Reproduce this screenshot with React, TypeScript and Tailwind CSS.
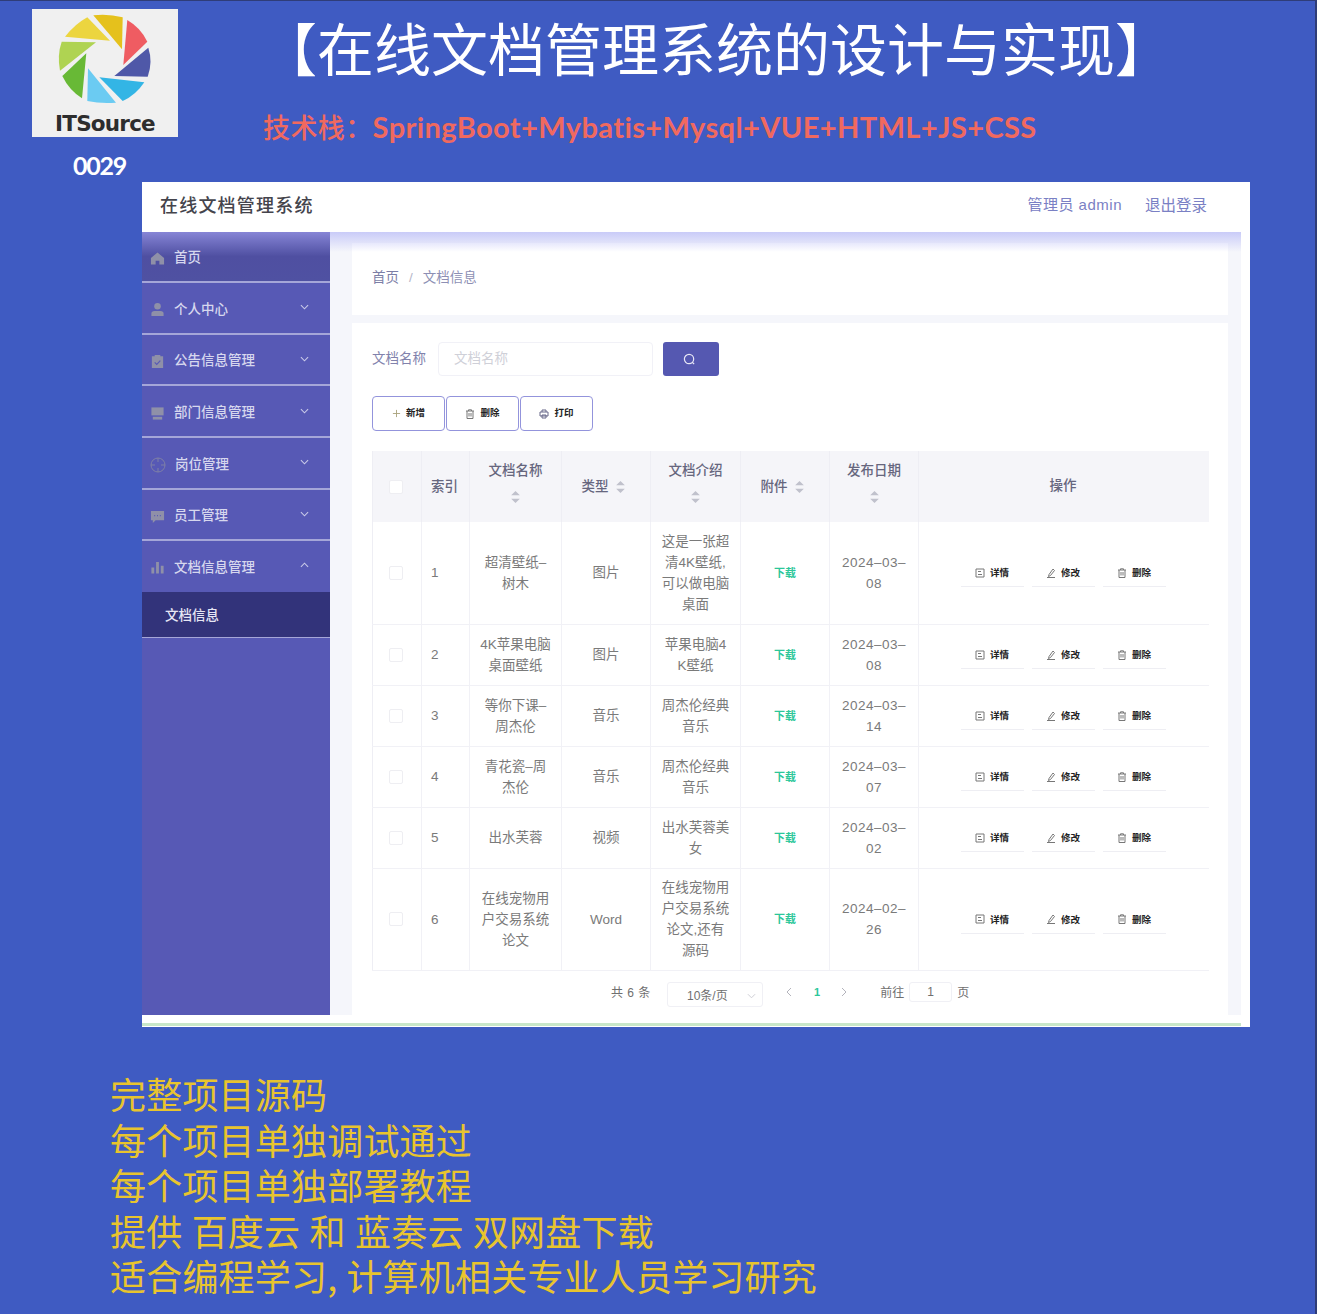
import React from 'react';

const menus = [
  { label: '个人中心', icon: 'user' },
  { label: '公告信息管理', icon: 'clip' },
  { label: '部门信息管理', icon: 'desk' },
  { label: '岗位管理', icon: 'aim' },
  { label: '员工管理', icon: 'chat' },
];

const rows = [
  { h: 'h-[102px]', n: '1', name: '超清壁纸–\n树木', type: '图片', intro: '这是一张超\n清4K壁纸,\n可以做电脑\n桌面', date: '2024–03–\n08' },
  { h: 'h-[61px]', n: '2', name: '4K苹果电脑\n桌面壁纸', type: '图片', intro: '苹果电脑4\nK壁纸', date: '2024–03–\n08' },
  { h: 'h-[61px]', n: '3', name: '等你下课–\n周杰伦', type: '音乐', intro: '周杰伦经典\n音乐', date: '2024–03–\n14' },
  { h: 'h-[61px]', n: '4', name: '青花瓷–周\n杰伦', type: '音乐', intro: '周杰伦经典\n音乐', date: '2024–03–\n07' },
  { h: 'h-[61px]', n: '5', name: '出水芙蓉', type: '视频', intro: '出水芙蓉美\n女', date: '2024–03–\n02' },
  { h: 'h-[102px]', n: '6', name: '在线宠物用\n户交易系统\n论文', type: 'Word', intro: '在线宠物用\n户交易系统\n论文,还有\n源码', date: '2024–02–\n26' },
];

const Logo = () => (
  <svg viewBox="32 9 146 100" className="w-[146px] h-[100px] block">
    <path d="M65 36.7Q75 24 87.3 17.3L110 40.7Z" fill="#ecd53f" />
    <path d="M93.3 15.3Q108 13.5 122.7 17.3L122 49.3Z" fill="#e5c11c" />
    <path d="M127.3 20Q141 28 147.3 41.7L123.3 65Z" fill="#ef5c62" />
    <path d="M148.3 47.7Q153 62 147.7 76.7L114.3 76Z" fill="#4f58a8" />
    <path d="M99.3 77.3L144.3 82.3Q136 95 122.7 101Z" fill="#33b5e5" />
    <path d="M88 68.3L116 102.7Q101 104 87.3 101Z" fill="#6bcbf2" />
    <path d="M86.3 53.3L82 98.3Q69 90 62.3 76Z" fill="#68b936" />
    <path d="M61.7 41.7L96 42.3L60 70.7Q57 55 61.7 41.7Z" fill="#afd352" />
  </svg>
);

const MenuIcon = ({ name }: { name: string }) => {
  const c = 'w-[15px] h-[15px] shrink-0 fill-[#8f90a8]';
  if (name === 'home') return <svg viewBox="0 0 16 16" className={c}><path d="M8 1.500 1 7.500V14.500h5v-4h4v4h5V7.500Z" /></svg>;
  if (name === 'user') return <svg viewBox="0 0 16 16" className={c}><circle cx="8" cy="4.500" r="3.500" /><path d="M1.500 15v-2.500Q1.500 9.500 5 9.500h6q3.500 0 3.500 3V15Z" /></svg>;
  if (name === 'clip') return <svg viewBox="0 0 16 16" className={c}><path d="M2 2.500h3V1h6v1.500h3V15H2Z" /><path d="M5 9l2.200 2.200L11 7" fill="none" stroke="#5759b5" strokeWidth="1.200" /></svg>;
  if (name === 'desk') return <svg viewBox="0 0 16 16" className={c}><path d="M1.500 1.500h13v8.500h-13Z" /><path d="M3 11.500h10V14.500H3Z" /></svg>;
  if (name === 'aim') return <svg viewBox="0 0 16 16" className="w-[16px] h-[16px] shrink-0 fill-none stroke-[#7f80a6]"><circle cx="8" cy="8" r="7" /><path d="M8 1v4M8 11v4M1 8h4M11 8h4" /></svg>;
  if (name === 'chat') return <svg viewBox="0 0 16 16" className={c}><path d="M1 2h14v10H6l-3 3v-3H1Z" /><path d="M4.500 7h1M7.500 7h1M10.500 7h1" stroke="#5759b5" strokeWidth="1.200" /></svg>;
  return <svg viewBox="0 0 16 16" className={c}><path d="M1.500 8h3v6.500h-3ZM6.500 2h3v12.500h-3ZM11.500 6h3v8.500h-3Z" /></svg>;
};

const Chevron = ({ up }: { up?: boolean }) => (
  <svg viewBox="0 0 10 6" className="w-[9px] h-[6px] fill-none stroke-[#c9cae8] stroke-[1.200] mb-[5px]">
    <path d={up ? 'M1 5 5 1l4 4' : 'M1 1l4 4 4-4'} />
  </svg>
);

const MenuRow = ({ label, icon }: { label: string; icon: string }) => (
  <div className="h-[51.7px] flex items-center pt-[4px] pl-[8px] pr-[21px] border-b-2 border-[#a5a6d8] gap-[9px] text-[13.500px] text-[#d6d7ee] font-medium">
    <MenuIcon name={icon} />
    <span className="flex-1">{label}</span>
    <Chevron />
  </div>
);

const Sort = () => (
  <svg viewBox="0 0 8 11" className="inline-block w-[9px] h-[12px] fill-[#c0c1cc]">
    <path d="M4 0 8 4H0ZM0 7h8l-4 4Z" />
  </svg>
);

const Th = ({ label, stack }: { label: string; stack?: boolean }) => (
  <th className="border-r border-[#eeeef4] font-medium text-[13.500px] text-[#66667e]">
    {stack ? (
      <div className="flex flex-col items-center gap-[11px] -mt-[8px]">
        <span className="leading-[18px]">{label}</span>
        <Sort />
      </div>
    ) : (
      <div className="flex items-center justify-center gap-[7px] pr-[6px] pt-[1px]">
        <span>{label}</span>
        <Sort />
      </div>
    )}
  </th>
);

const ActionIcon = ({ kind }: { kind: string }) => {
  const c = 'w-[10px] h-[10px] fill-none stroke-[#777] stroke-[1]';
  if (kind === 'edit') return <svg viewBox="0 0 10 10" className={c}><path d="M7 1 3 6.500 2.500 8.500 4.500 7.500 8.500 2.500ZM1 9.500h8" /></svg>;
  if (kind === 'del') return <svg viewBox="0 0 10 10" className={c}><path d="M1 2h8M3.500 2V.8h3V2M2 2v7.500h6V2M4 4v3.500M6 4v3.500" /></svg>;
  return <svg viewBox="0 0 10 10" className={c}><path d="M1 1h8v8H1ZM3 3.500h3M3 6.500h4" /></svg>;
};

const ActionBtn = ({ kind, label }: { kind: string; label: string }) => (
  <div className="w-[63px] h-[28px] flex items-center justify-center gap-[5px] border-b border-[#eeeef3] text-[9.500px] font-bold text-[#222]">
    <ActionIcon kind={kind} />
    <span>{label}</span>
  </div>
);

const ToolBtn = ({ icon, label }: { icon: React.ReactNode; label: string }) => (
  <div className="w-[73px] h-[35px] flex items-center justify-center gap-[5px] border border-[#9394dc] rounded-[4px] bg-white text-[9.500px] font-bold text-[#222]">
    {icon}
    <span>{label}</span>
  </div>
);

const Box = () => <div className="w-[14px] h-[14px] mx-auto bg-white border border-[#eeeef2] rounded-[2px] -translate-x-[1px]" />;

const cell = 'border-r border-[#f1f1f6] text-center whitespace-pre-line';

export default function App() {
  return (
    <div className="w-[1317px] h-[1314px] overflow-hidden bg-[#3f5bc2] border-t border-r-2 border-[#2f3d78] font-['Liberation_Sans','Noto_Sans_CJK_SC',sans-serif]">
      {/* banner */}
      <div className="flex h-[181px]">
        <div className="ml-[32px] mt-[8px] w-[146px]">
          <div className="h-[128px] bg-[#f0f0f0]">
            <Logo />
            <div className="text-center text-[21.500px] leading-[26px] font-bold text-[#2d2d2d] font-['DejaVu_Sans',sans-serif] tracking-[-0.8px] pt-[2px]">ITSource</div>
          </div>
          <div className="text-center text-white font-bold text-[25px] leading-[30px] mt-[13px] -ml-[11px] tracking-[-1.200px] font-['Lato',sans-serif]">0029</div>
        </div>
        <div className="ml-[85px]">
          <div className="text-white text-[57px] leading-[70px] mt-[10px] -ml-[3px] whitespace-nowrap font-['Noto_Sans_CJK_SC',sans-serif]">【在线文档管理系统的设计与实现】</div>
          <div className="text-[#f0695f] text-[29px] leading-[40px] mt-[26px] tracking-[0.4px] whitespace-nowrap font-bold font-['Lato','Noto_Sans_CJK_SC',sans-serif]">
            <span className="text-[27px] font-medium">技术栈：</span>SpringBoot+Mybatis+Mysql+VUE+HTML+JS+CSS
          </div>
        </div>
      </div>

      {/* app window */}
      <div className="ml-[142px] w-[1108px] h-[845px] bg-white flex flex-col">
        <div className="h-[50px] shrink-0 flex items-center pl-[18px] pr-[43px] pb-[5px]">
          <div className="flex-1 text-[18px] tracking-[1.200px] font-medium text-[#44444c] font-['Noto_Sans_CJK_SC',sans-serif]">在线文档管理系统</div>
          <div className="pt-[2px] text-[15px] tracking-[0.5px] text-[#7a80c4]">管理员 admin</div>
          <div className="pt-[2px] ml-[23px] text-[15.500px] text-[#7a80c4]">退出登录</div>
        </div>
        <div className="flex h-[783px] mr-[9px]">
          <div className="w-[188px] shrink-0 bg-[#5759b5]">
            <div className="h-[51px] flex items-center pt-[3px] pl-[8px] gap-[9px] border-b-2 border-[#a5a6d8] text-[13.500px] text-[#d6d7ee] font-medium bg-gradient-to-b from-[#8785d6] via-[#4f4fa1] via-50% to-[#4f51a2]">
              <MenuIcon name="home" />
              <span>首页</span>
            </div>
            {menus.map((m) => (
              <MenuRow key={m.label} label={m.label} icon={m.icon} />
            ))}
            <div className="h-[51px] flex items-center pt-[2px] pl-[8px] pr-[21px] gap-[9px] text-[13.500px] text-[#d6d7ee] font-medium">
              <MenuIcon name="bars" />
              <span className="flex-1">文档信息管理</span>
              <Chevron up />
            </div>
            <div className="h-[46px] flex items-center pt-[2px] pl-[23px] bg-[#32337a] border-b border-[#a5a6d8] text-[13.500px] font-medium text-[#e6e6f4]">文档信息</div>
          </div>

          <div className="relative flex-1 bg-[#f5f6fb] pt-[11px] pl-[22px] pr-[13px]">
            <div className="absolute left-0 right-0 top-0 h-[20px] bg-gradient-to-b from-[#c9cbf8] to-transparent" />
            <div className="h-[72px] bg-white flex items-center pl-[20px] pb-[1px] text-[13.500px] text-[#8d8fb4] gap-[10px]">
              <span className="text-[#7c7ea6]">首页</span>
              <span className="text-[#b5b6c8]">/</span>
              <span>文档信息</span>
            </div>
            <div className="mt-[8px] h-[692px] bg-white pl-[20px] pr-[19px] pt-[19px]">
              <div className="flex items-center h-[34px]">
                <span className="text-[13.500px] text-[#8182ac] w-[66px]">文档名称</span>
                <div className="w-[215px] h-[34px] border border-[#f1f1f7] rounded-[4px] flex items-center pl-[15px] text-[13.500px] text-[#cfd0d8]">文档名称</div>
                <div className="ml-[10px] w-[56px] h-[34px] rounded-[3px] bg-[#5558b1] flex items-center justify-center">
                  <svg viewBox="0 0 14 14" className="w-[13px] h-[13px] fill-none stroke-[#e8e8f6] stroke-[1.300] -ml-[3px]"><circle cx="6.500" cy="6.500" r="5" /><path d="m10 10 2 2" /></svg>
                </div>
              </div>
              <div className="flex gap-[1px] mt-[20px]">
                <ToolBtn label="新增" icon={<svg viewBox="0 0 10 10" className="w-[9px] h-[9px] stroke-[#a8a27a] fill-none"><path d="M5 1v8M1 5h8" /></svg>} />
                <ToolBtn label="删除" icon={<ActionIcon kind="del" />} />
                <ToolBtn label="打印" icon={<svg viewBox="0 0 10 10" className="w-[10px] h-[10px] stroke-[#668] fill-none"><path d="M3 3V1h4v2M1 3h8v4H1ZM3 6h4v3H3Z" /></svg>} />
              </div>
              <table className="mt-[20px] w-[837px] table-fixed border-collapse border-l border-b border-[#eeeef4]">
                <colgroup>
                  <col className="w-[49px]" />
                  <col className="w-[48px]" />
                  <col className="w-[92px]" />
                  <col className="w-[89px]" />
                  <col className="w-[90px]" />
                  <col className="w-[89px]" />
                  <col className="w-[89px]" />
                  <col />
                </colgroup>
                <thead>
                  <tr className="h-[71px] bg-[#f5f5f9]">
                    <th className="border-r border-[#eeeef4]"><Box /></th>
                    <th className="border-r border-[#eeeef4] font-medium text-[13.500px] text-[#66667e] text-left pl-[9px] pt-[1px]">索引</th>
                    <Th label="文档名称" stack />
                    <Th label="类型" />
                    <Th label="文档介绍" stack />
                    <Th label="附件" />
                    <Th label="发布日期" stack />
                    <th className="font-medium text-[13.500px] text-[#66667e] pr-[2px]">操作</th>
                  </tr>
                </thead>
                <tbody className="text-[13.500px] leading-[21px] text-[#7a7a7a]">
                  {rows.map((r) => (
                    <tr key={r.n} className={`${r.h} border-b border-[#f1f1f6]`}>
                      <td className="border-r border-[#f1f1f6]"><Box /></td>
                      <td className="border-r border-[#f1f1f6] pl-[9px]">{r.n}</td>
                      <td className={cell}>{r.name}</td>
                      <td className={cell}>{r.type}</td>
                      <td className={cell}>{r.intro}</td>
                      <td className={`${cell} text-[11px] font-bold text-[#2cc79a] pt-[1px]`}>下载</td>
                      <td className={`${cell} tracking-[0.5px]`}>{r.date}</td>
                      <td>
                        <div className="flex justify-center gap-[8px] pr-[2px] pt-[1px]">
                          <ActionBtn kind="info" label="详情" />
                          <ActionBtn kind="edit" label="修改" />
                          <ActionBtn kind="del" label="删除" />
                        </div>
                      </td>
                    </tr>
                  ))}
                </tbody>
              </table>
              <div className="flex items-start mt-[11px] ml-[239px] text-[12px] text-[#6f6f6f]">
                <span className="mt-[2px] w-[56px] tracking-[0.5px]">共 6 条</span>
                <div className="w-[96px] h-[25px] border border-[#f0f0f5] rounded-[3px] flex items-center pl-[19px] pr-[6px] pt-[3px] justify-between">
                  <span>10条/页</span>
                  <svg viewBox="0 0 10 6" className="w-[9px] h-[6px] fill-none stroke-[#c8c8d0]"><path d="M1 1l4 4 4-4" /></svg>
                </div>
                <svg viewBox="0 0 6 10" className="ml-[23px] mt-[5px] w-[6px] h-[10px] fill-none stroke-[#b4b4bc]"><path d="M5 1 1 5l4 4" /></svg>
                <span className="ml-[22px] mt-[2px] font-bold text-[#2cc79a] text-[11px]">1</span>
                <svg viewBox="0 0 6 10" className="ml-[21px] mt-[5px] w-[6px] h-[10px] fill-none stroke-[#b4b4bc]"><path d="m1 1 4 4-4 4" /></svg>
                <span className="ml-[33px] mt-[2px]">前往</span>
                <div className="ml-[5px] w-[43px] h-[20px] border border-[#f0f0f5] rounded-[3px] text-center leading-[18px]">1</div>
                <span className="ml-[5px] mt-[2px]">页</span>
              </div>
            </div>
          </div>
        </div>
        <div className="mt-[8px] mr-[9px] h-[3px] bg-[#c8e6c9]" />
      </div>

      {/* footer notes */}
      <div className="mt-[44px] pl-[110px] text-[36px] tracking-[0.2px] [word-spacing:1px] leading-[45.500px] text-[#e8c42e] font-['Noto_Sans_CJK_SC',sans-serif]">
        <div>完整项目源码</div>
        <div>每个项目单独调试通过</div>
        <div>每个项目单独部署教程</div>
        <div>提供 百度云 和 蓝奏云 双网盘下载</div>
        <div>适合编程学习<span className="mr-[9px]">,</span>计算机相关专业人员学习研究</div>
      </div>
    </div>
  );
}
